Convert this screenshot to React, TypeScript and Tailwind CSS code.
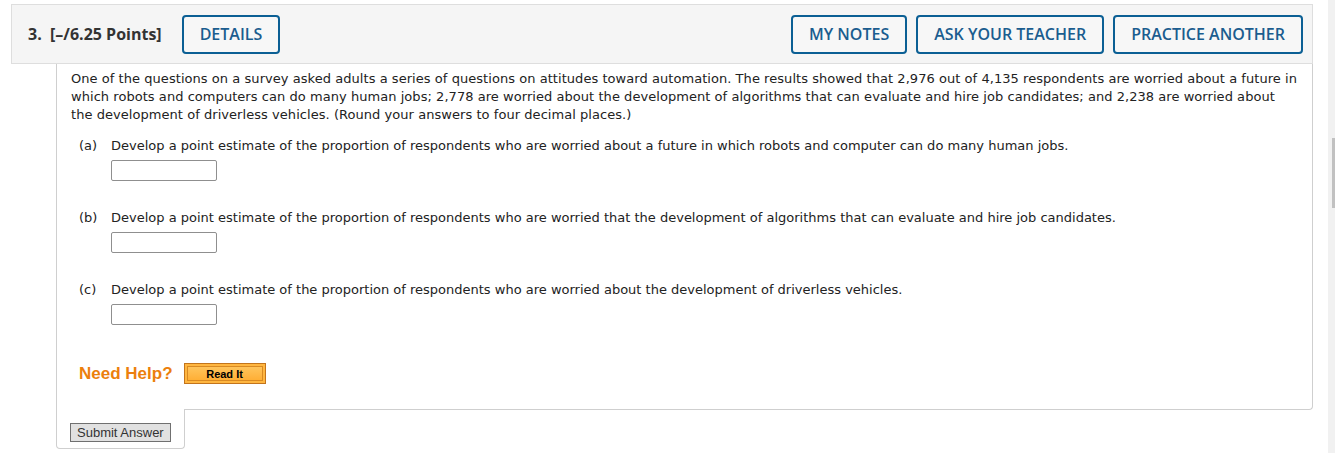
const parts = [
  {
    label: '(a)',
    text: 'Develop a point estimate of the proportion of respondents who are worried about a future in which robots and computer can do many human jobs.',
  },
  {
    label: '(b)',
    text: 'Develop a point estimate of the proportion of respondents who are worried that the development of algorithms that can evaluate and hire job candidates.',
  },
  {
    label: '(c)',
    text: 'Develop a point estimate of the proportion of respondents who are worried about the development of driverless vehicles.',
  },
]

function HeaderButton({ children }: { children: React.ReactNode }) {
  return (
    <button className="h-[39px] px-[16px] rounded-[4px] border-2 border-[#0b5f94] bg-[#f7f7f7] text-[#1b5d8f] text-[16px] font-semibold uppercase font-['Open_Sans',sans-serif]">
      {children}
    </button>
  )
}

export default function App() {
  return (
    <div className="relative min-h-[453px] bg-white pt-[4px] pl-[11px] font-['DejaVu_Sans',Verdana,sans-serif] text-[#222]">
      {/* Header */}
      <div className="w-[1302px] h-[60px] bg-[#f5f5f5] border border-[#dedede] flex items-center pl-[16px] pr-[9px]">
        <span className="text-[16px] font-bold text-[#333] font-['Open_Sans',sans-serif] mr-[20px]">
          3.&nbsp;&nbsp;[–/6.25 Points]
        </span>
        <HeaderButton>Details</HeaderButton>
        <div className="flex-1" />
        <div className="flex gap-[9px]">
          <HeaderButton>My Notes</HeaderButton>
          <HeaderButton>Ask Your Teacher</HeaderButton>
          <HeaderButton>Practice Another</HeaderButton>
        </div>
      </div>

      {/* Question body */}
      <div className="ml-[45px] w-[1257px] border-x border-b border-[#cfcfcf] rounded-br-[4px] pl-[14px] pr-[12px] pt-[6px] pb-[22px]">
        <p className="text-[13px] leading-[18px] tracking-[0.05px]">
          One of the questions on a survey asked adults a series of questions on attitudes toward automation. The results showed that 2,976 out of 4,135 respondents are worried about a future in which robots and computers can do many human jobs; 2,778 are worried about the development of algorithms that can evaluate and hire job candidates; and 2,238 are worried about the development of driverless vehicles. (Round your answers to four decimal places.)
        </p>

        <div className="mt-[13px] flex flex-col gap-[28px]">
          {parts.map((p) => (
            <div key={p.label} className="flex pl-[8px]">
              <span className="w-[32px] text-[13px] leading-[18px]">{p.label}</span>
              <div>
                <p className="text-[13px] leading-[18px]">{p.text}</p>
                <input
                  type="text"
                  className="mt-[5px] block w-[106px] h-[21px] border border-[#8f8f8f] rounded-[2px] bg-white"
                />
              </div>
            </div>
          ))}
        </div>

        <div className="mt-[36px] flex items-center pl-[8px]">
          <span className="text-[17px] font-bold text-[#ec7f0d] font-['Liberation_Sans',Arial,sans-serif] mr-[11px]">
            Need Help?
          </span>
          <button className="w-[82px] h-[21px] border border-[#c3741b] bg-[#ffb640] p-[2px]">
            <span className="flex h-full items-center justify-center border border-[#d98a22] bg-gradient-to-b from-[#ffc45a] to-[#ffaf35] text-[11px] font-bold text-black font-['Liberation_Sans',Arial,sans-serif]">
              Read It
            </span>
          </button>
        </div>
      </div>

      {/* Submit tab */}
      <div className="ml-[45px] -mt-px w-[129px] h-[40px] border-x border-b border-[#cfcfcf] rounded-b-[4px] bg-white pl-[13px] pt-[11px]">
        <button className="h-[19px] px-[6px] border border-[#707070] bg-[#e1e1e1] text-[13px] leading-[17px] text-[#333] font-['Liberation_Sans',Arial,sans-serif]">
          Submit Answer
        </button>
      </div>

      {/* Scrollbar */}
      <div className="fixed top-0 right-0 w-[7px] h-[453px] bg-[#f1f1f1]">
        <div className="ml-[4px] mt-[138px] w-[3px] h-[70px] bg-[#c1c1c1]" />
      </div>
    </div>
  )
}
